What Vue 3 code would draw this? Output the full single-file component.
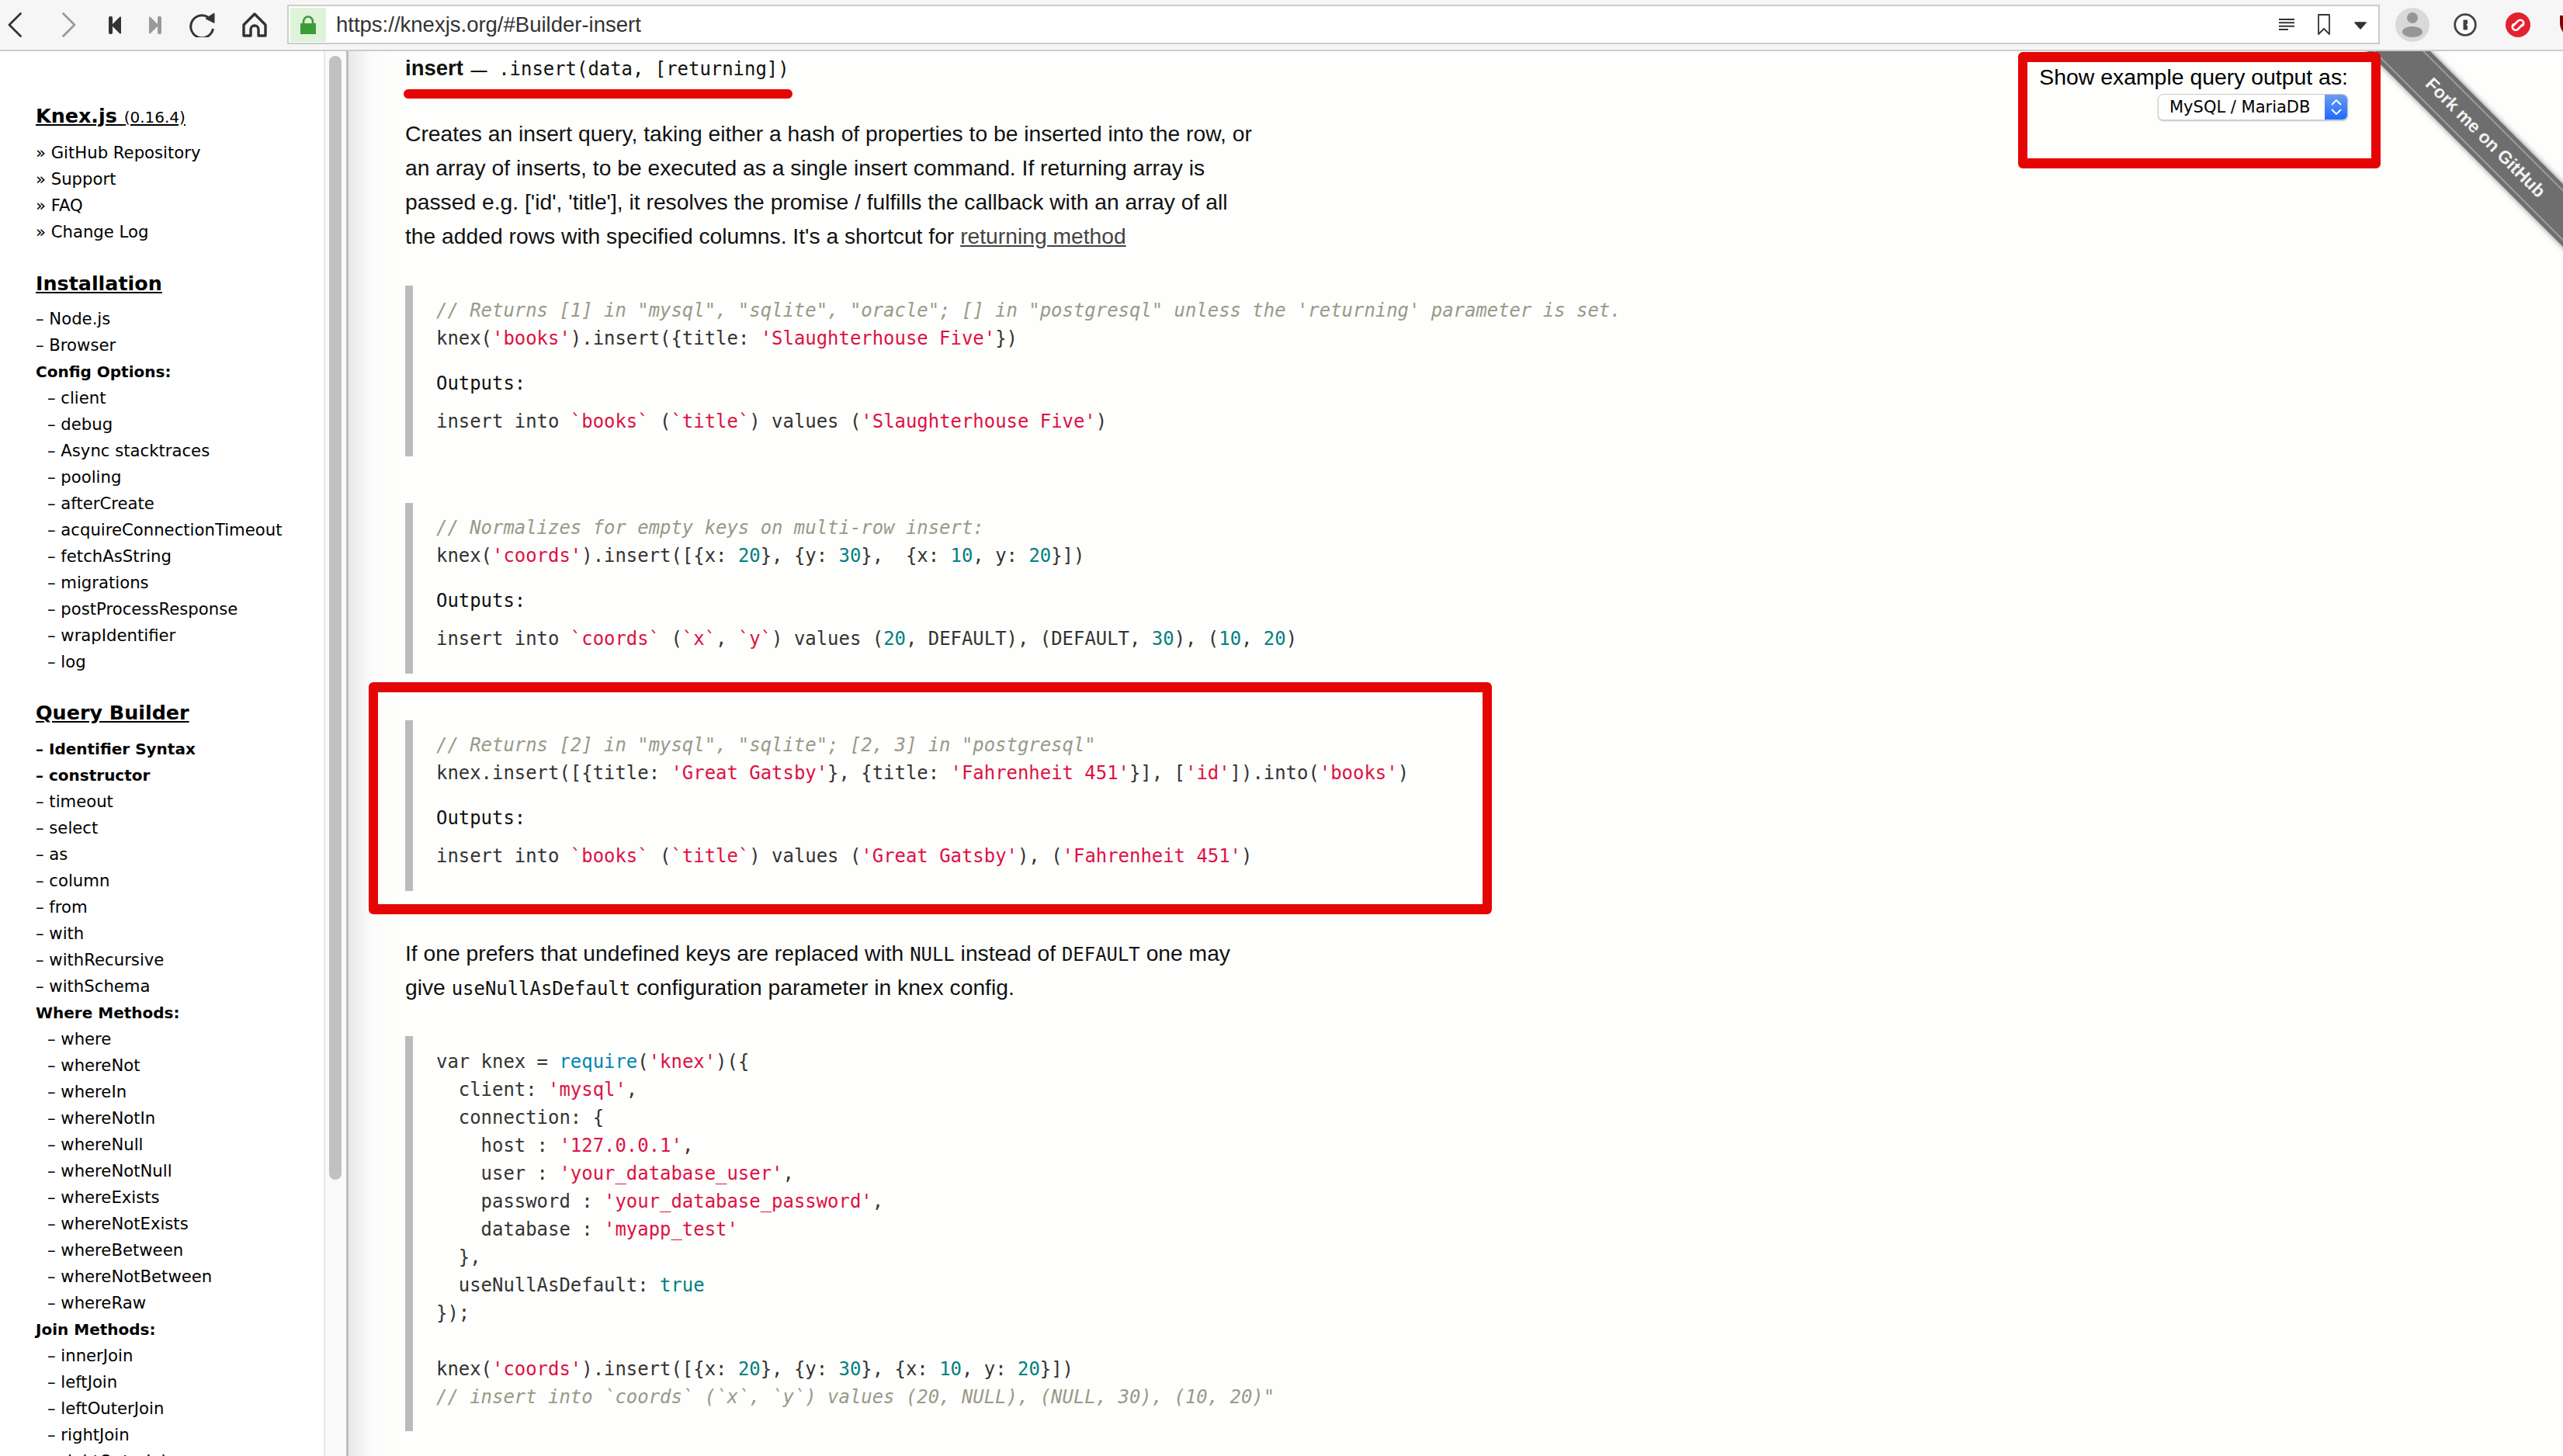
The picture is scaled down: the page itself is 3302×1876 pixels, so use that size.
<script setup>
const intro = ['» GitHub Repository', '» Support', '» FAQ', '» Change Log']
const install = [
  ['top', 'Node.js'], ['top', 'Browser'], ['group', 'Config Options:'],
  ['sub', 'client'], ['sub', 'debug'], ['sub', 'Async stacktraces'], ['sub', 'pooling'], ['sub', 'afterCreate'],
  ['sub', 'acquireConnectionTimeout'], ['sub', 'fetchAsString'], ['sub', 'migrations'], ['sub', 'postProcessResponse'],
  ['sub', 'wrapIdentifier'], ['sub', 'log']
]
const builder = [
  ['strong', 'Identifier Syntax'], ['strong', 'constructor'], ['top', 'timeout'], ['top', 'select'], ['top', 'as'], ['top', 'column'],
  ['top', 'from'], ['top', 'with'], ['top', 'withRecursive'], ['top', 'withSchema'], ['group', 'Where Methods:'],
  ['sub', 'where'], ['sub', 'whereNot'], ['sub', 'whereIn'], ['sub', 'whereNotIn'], ['sub', 'whereNull'], ['sub', 'whereNotNull'],
  ['sub', 'whereExists'], ['sub', 'whereNotExists'], ['sub', 'whereBetween'], ['sub', 'whereNotBetween'], ['sub', 'whereRaw'],
  ['group', 'Join Methods:'], ['sub', 'innerJoin'], ['sub', 'leftJoin'], ['sub', 'leftOuterJoin'], ['sub', 'rightJoin'], ['sub', 'rightOuterJoin']
]
const label = (kind, text) => (kind === 'group' ? text : '– ' + text)
</script>

<template>
  <div class="page">
    <header class="toolbar">
      <svg class="ic back" width="18" height="32" viewBox="0 0 18 32"><path d="M16.500 1.500 2 16l14.500 14.500" fill="none" stroke="#333" stroke-width="2.800" stroke-linecap="round" stroke-linejoin="round"/></svg>
      <svg class="ic fwd" width="18" height="32" viewBox="0 0 18 32"><path d="M1.500 1.500 16 16 1.500 30.500" fill="none" stroke="#999" stroke-width="2.800" stroke-linecap="round" stroke-linejoin="round"/></svg>
      <svg class="ic skipb" width="16" height="23" viewBox="0 0 16 23"><rect width="5" height="23" rx="2" fill="#333"/><path d="M15 1.500v20L5 11.500z" fill="#333" stroke="#333" stroke-width="2" stroke-linejoin="round"/></svg>
      <svg class="ic skipf" width="16" height="23" viewBox="0 0 16 23"><rect x="11" width="5" height="23" rx="2" fill="#999"/><path d="M1 1.500v20l10-10z" fill="#999" stroke="#999" stroke-width="2" stroke-linejoin="round"/></svg>
      <svg class="ic reload" width="33" height="32" viewBox="0 0 33 32"><path d="M24 6A14.500 14.500 0 1 0 30.500 21" fill="none" stroke="#333" stroke-width="3"/><path d="M21 8 32 1v12.500z" fill="#333" stroke="#333" stroke-linejoin="round"/></svg>
      <svg class="ic home" width="32" height="32" viewBox="0 0 32 32"><path d="M16 2 30 16V30H21V22a5 5 0 0 0-10 0V30H2V16Z" fill="none" stroke="#333" stroke-width="3.400" stroke-linejoin="round"/></svg>
      <div class="url">
        <div class="lock-tile">
          <svg width="20" height="24" viewBox="0 0 20 24"><path d="M4 11V8a6 6.500 0 0 1 12 0v3" fill="none" stroke="#3c9c3a" stroke-width="2.600"/><rect y="10" width="20" height="14" fill="#3c9c3a"/></svg>
        </div>
        <span class="url-text">https://knexjs.org/#Builder-insert</span>
        <svg class="reader" width="20" height="15" viewBox="0 0 20 15"><path d="M0 1h20M0 5.300h20M0 9.700h20M0 14h12" stroke="#333" stroke-width="2"/></svg>
        <svg class="mark" width="16" height="27" viewBox="0 0 16 27"><path d="M1 1h14v25l-7-7-7 7z" fill="none" stroke="#333" stroke-width="1.800" stroke-linejoin="round"/></svg>
        <svg class="drop" width="16" height="10" viewBox="0 0 16 10"><path d="M1 1h14L8 9z" fill="#333" stroke="#333" stroke-width="1.600" stroke-linejoin="round"/></svg>
      </div>
      <svg class="avatar" width="44" height="44" viewBox="0 0 44 44"><circle cx="22" cy="22" r="22" fill="#d9d9d9"/><circle cx="22" cy="13" r="7" fill="#969696"/><ellipse cx="22" cy="31" rx="13" ry="7" fill="#969696"/></svg>
      <svg class="onepass" width="30" height="30" viewBox="0 0 30 30"><circle cx="15" cy="15" r="13.300" fill="#fff" stroke="#444" stroke-width="2.800"/><path d="M12.500 8.500h5.500v5l-1.500 1.500 1.500 1.500v5h-5.500z" fill="#444"/></svg>
      <svg class="authy" width="32" height="32" viewBox="0 0 32 32"><circle cx="16" cy="16" r="16" fill="#e3212f"/><path d="M10 17l6-6a4 4 0 0 1 6 6M22 15.500l-6 6a4 4 0 0 1-6-6" fill="none" stroke="#fff" stroke-width="2.600" stroke-linecap="round"/></svg>
      <svg class="ublock" width="14" height="28" viewBox="0 0 14 28"><path d="M0 0h14v28C6 26 0 18 0 10z" fill="#800"/></svg>
    </header>

    <div class="body">
      <nav class="sidebar">
        <h1 class="nav-title first"><a>Knex.js <small>(0.16.4)</small></a></h1>
        <ul class="intro">
          <li v-for="item in intro" :key="item">{{ item }}</li>
        </ul>
        <h2 class="nav-title"><a>Installation</a></h2>
        <ul>
          <li v-for="[kind, text] in install" :key="text" :class="kind">{{ label(kind, text) }}</li>
        </ul>
        <h2 class="nav-title query"><a>Query Builder</a></h2>
        <ul>
          <li v-for="[kind, text] in builder" :key="text" :class="kind">{{ label(kind, text) }}</li>
        </ul>
      </nav>
      <div class="scrollbar"><div class="thumb"></div></div>

      <main class="main">
        <div class="content">
          <p class="heading"><b>insert</b> <span class="dash">—</span> <code>.insert(data, [returning])</code></p>
          <p class="para">Creates an insert query, taking either a hash of properties to be inserted into the row, or an array of inserts, to be executed as a single insert command. If returning array is passed e.g. ['id', 'title'], it resolves the promise / fulfills the callback with an array of all the added rows with specified columns. It's a shortcut for <a class="link">returning method</a></p>

          <section class="block">
<pre><i class="tk-com">// Returns [1] in "mysql", "sqlite", "oracle"; [] in "postgresql" unless the 'returning' parameter is set.</i>
knex(<span class="tk-str">'books'</span>).insert({title: <span class="tk-str">'Slaughterhouse Five'</span>})</pre>
            <p class="outputs">Outputs:</p>
<pre>insert into <span class="tk-str">`books`</span> (<span class="tk-str">`title`</span>) values (<span class="tk-str">'Slaughterhouse Five'</span>)</pre>
          </section>

          <section class="block">
<pre><i class="tk-com">// Normalizes for empty keys on multi-row insert:</i>
knex(<span class="tk-str">'coords'</span>).insert([{x: <span class="tk-num">20</span>}, {y: <span class="tk-num">30</span>},  {x: <span class="tk-num">10</span>, y: <span class="tk-num">20</span>}])</pre>
            <p class="outputs">Outputs:</p>
<pre>insert into <span class="tk-str">`coords`</span> (<span class="tk-str">`x`</span>, <span class="tk-str">`y`</span>) values (<span class="tk-num">20</span>, DEFAULT), (DEFAULT, <span class="tk-num">30</span>), (<span class="tk-num">10</span>, <span class="tk-num">20</span>)</pre>
          </section>

          <section class="block">
<pre><i class="tk-com">// Returns [2] in "mysql", "sqlite"; [2, 3] in "postgresql"</i>
knex.insert([{title: <span class="tk-str">'Great Gatsby'</span>}, {title: <span class="tk-str">'Fahrenheit 451'</span>}], [<span class="tk-str">'id'</span>]).into(<span class="tk-str">'books'</span>)</pre>
            <p class="outputs">Outputs:</p>
<pre>insert into <span class="tk-str">`books`</span> (<span class="tk-str">`title`</span>) values (<span class="tk-str">'Great Gatsby'</span>), (<span class="tk-str">'Fahrenheit 451'</span>)</pre>
          </section>

          <p class="para second">If one prefers that undefined keys are replaced with <code>NULL</code> instead of <code>DEFAULT</code> one may give <code>useNullAsDefault</code> configuration parameter in knex config.</p>

          <section class="block last">
<pre>var knex = <span class="tk-fn">require</span>(<span class="tk-str">'knex'</span>)({
  client: <span class="tk-str">'mysql'</span>,
  connection: {
    host : <span class="tk-str">'127.0.0.1'</span>,
    user : <span class="tk-str">'your_database_user'</span>,
    password : <span class="tk-str">'your_database_password'</span>,
    database : <span class="tk-str">'myapp_test'</span>
  },
  useNullAsDefault: <span class="tk-num">true</span>
});

knex(<span class="tk-str">'coords'</span>).insert([{x: <span class="tk-num">20</span>}, {y: <span class="tk-num">30</span>}, {x: <span class="tk-num">10</span>, y: <span class="tk-num">20</span>}])
<i class="tk-com">// insert into `coords` (`x`, `y`) values (20, NULL), (NULL, 30), (10, 20)"</i></pre>
          </section>
        </div>

        <div class="ribbon"><span>Fork me on GitHub</span></div>

        <div class="switcher">
          <div>Show example query output as:</div>
          <div class="select"><span>MySQL / MariaDB</span>
            <i class="arrows">
              <svg width="16" height="28" viewBox="0 0 16 28"><path d="M2 11l6-6 6 6M2 17l6 6 6-6" fill="none" stroke="#fff" stroke-width="1.800"/></svg>
            </i>
          </div>
        </div>

        <div class="mark-line"></div>
        <div class="mark-box top"></div>
        <div class="mark-box code"></div>
      </main>
    </div>
  </div>
</template>

<style scoped>
.page { width: 3302px; height: 1876px; overflow: hidden; background: #fff; display: flex; flex-direction: column; font-family: "Liberation Sans", Arial, sans-serif; color: #000; }

.toolbar { height: 64px; flex: none; box-sizing: content-box; border-bottom: 2px solid #ccc; background: #f6f6f6; display: flex; align-items: center; padding-left: 10px; }
.ic { flex: none; }
.fwd { margin-left: 52px; }
.skipb { margin-left: 42px; }
.skipf { margin-left: 36px; }
.reload { margin-left: 36px; }
.home { margin-left: 35px; }
.url { margin-left: 26px; flex: 1 0 0; min-width: 0; box-sizing: border-box; height: 51px; border: 2px solid #ccc; background: #fff; display: flex; align-items: center; padding: 0 15px 0 2px; margin-top: -1px; }
.lock-tile { width: 46px; height: 44px; background: #dff3d8; display: flex; align-items: center; justify-content: center; flex: none; }
.url-text { margin-left: 13px; font-size: 27.500px; color: #333; flex: 1; }
.reader { margin-right: 30px; }
.mark { margin-right: 31px; }
.drop { margin-top: 3px; }
.avatar { margin-left: 20px; flex: none; }
.onepass { margin-left: 31px; flex: none; }
.authy { margin-left: 37px; flex: none; }
.ublock { margin-left: 38px; margin-right: -10px; flex: none; margin-top: 3px; }

.body { flex: 1; min-height: 0; display: flex; }
.sidebar { width: 417px; flex: none; box-sizing: border-box; padding: 66px 0 0 46px; font-family: "DejaVu Sans", sans-serif; font-size: 21.200px; overflow: hidden; }
.nav-title { margin: 32px 0 12px; font-size: 25.400px; line-height: 34px; font-weight: 700; }
.nav-title.first { margin-top: 0; margin-bottom: 12px; }
.nav-title.query { margin-top: 31px; margin-bottom: 13px; }
.nav-title a { text-decoration: underline; }
.nav-title small { font-size: 20px; font-weight: 400; }
ul { list-style: none; margin: 0; padding: 0; }
li { line-height: 34px; white-space: nowrap; }
li.group, li.strong { font-weight: 700; font-size: 20px; }
li.sub { padding-left: 15px; }

.scrollbar { flex: none; background: #fafafa; border-left: 2px solid #e8e8e8; box-sizing: border-box; border-right: 3px solid #bdbdbd; padding: 6px 0 0 5px; width: 32px; }
.thumb { width: 16px; height: 1448px; background: #c1c1c1; border-radius: 8px; }

.main { flex: 1; min-width: 0; position: relative; overflow: hidden; background: linear-gradient(90deg, #e8e8e8 0, #fbfbfb 28px, #fefefc 60px); }
.content { padding: 5px 0 0 73px; }
code, pre, .outputs { font-family: "DejaVu Sans Mono", monospace; font-size: 23.930px; }
.heading { margin: 0; font-size: 27.500px; line-height: 34px; color: #111; }
.dash { font-size: 21px; font-weight: 700; margin-left: 2px; }
.heading code { margin-left: 7px; }
.para { margin: 43px 0 0; width: 1100px; font-size: 28.250px; line-height: 44px; color: #111; }
.para code { line-height: 0; }
.para.second { margin-top: -2px; }
.link { color: #444; text-decoration: underline; }
.block { border-left: 10px solid #bbb; margin: 42px 0 60px; padding: 14px 0 27px 30px; color: #333; }
.block + .block { margin-top: 0; }
.block.last { margin-top: 41px; padding: 15px 0 26px 30px; }
pre { margin: 0; line-height: 36px; }
.outputs { margin: 22px 0 13px; line-height: 36px; color: #111; }
.tk-com { color: #998; font-style: italic; }
.tk-str { color: #d14; }
.tk-num { color: #008080; }
.tk-fn { color: #0086b3; }

.ribbon { position: absolute; left: 2443px; top: 82.500px; width: 620px; height: 57px; background: #6e6e6e; transform: rotate(45deg); display: flex; align-items: center; justify-content: center; box-shadow: 0 0 7px rgba(0,0,0,.5); box-sizing: border-box; }
.ribbon span { flex: 1; text-align: center; border-top: 2px solid #9c9c9c; border-bottom: 2px solid #9c9c9c; line-height: 43px; color: #f2f2f2; font-size: 23px; font-weight: 700; }

.switcher { position: absolute; left: 2162px; top: 13px; width: 414px; background: #fefefc; padding: 3px 0 50px; text-align: right; font-size: 28.400px; line-height: 34px; color: #000; }
.select { display: inline-flex; align-items: center; justify-content: space-between; width: 245px; height: 34px; box-sizing: border-box; margin-top: 5px; background: #fff; border: 1px solid #ccc; border-radius: 7px; font-family: "DejaVu Sans", sans-serif; font-size: 21px; overflow: hidden; padding-left: 14px; text-align: left; box-shadow: 0 1px 2px rgba(0,0,0,.25); }
.arrows { width: 29px; height: 34px; background: linear-gradient(#6c9cf2, #1f69ff); display: flex; align-items: center; justify-content: center; }

.mark-line { position: absolute; left: 71px; top: 49px; width: 501px; height: 12px; background: #e60505; border-radius: 6px; }
.mark-box { position: absolute; box-sizing: border-box; border: 12px solid #e60505; border-width: 13px 12px; border-radius: 6px; }
.mark-box.top { left: 2151px; top: 1px; width: 467px; height: 150px; }
.mark-box.code { left: 26px; top: 813px; width: 1447px; height: 299px; }
</style>

<style>
html, body { margin: 0; overflow: hidden; }
</style>
